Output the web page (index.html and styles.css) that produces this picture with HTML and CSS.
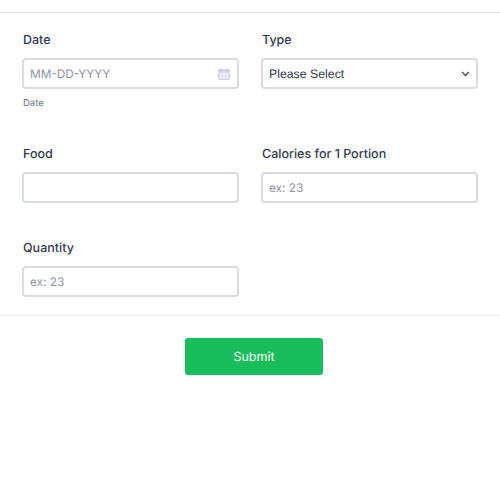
FILE: index.html
```html
<!DOCTYPE html>
<html lang="en">
<head>
<meta charset="utf-8">
<title>Food log</title>
<link rel="stylesheet" href="styles.css">
</head>
<body>
<form class="form">
  <div class="fields">
    <div class="row row-first">
      <div class="field">
        <label class="label">Date</label>
        <div class="control">
          <span class="placeholder">MM-DD-YYYY</span>
          <svg class="cal" width="12" height="12" viewBox="0 0 13 13"><path d="M0 2.5a1 1 0 0 1 1-1h11a1 1 0 0 1 1 1V4H0z" fill="#c5c8d6"/><path d="M0 4.6h13V12a1 1 0 0 1-1 1H1a1 1 0 0 1-1-1z" fill="#d3d5e0"/><rect x="2.5" y="0.3" width="1.4" height="2" fill="#c5c8d6"/><rect x="9.1" y="0.3" width="1.4" height="2" fill="#c5c8d6"/><g fill="#fff"><rect x="1.8" y="6" width="2.4" height="2"/><rect x="5.3" y="6" width="2.4" height="2"/><rect x="8.8" y="6" width="2.4" height="2"/><rect x="1.8" y="9.3" width="2.4" height="2"/><rect x="5.3" y="9.3" width="2.4" height="2"/><rect x="8.8" y="9.3" width="2.4" height="2"/></g></svg>
        </div>
        <div class="helper">Date</div>
      </div>
      <div class="field">
        <label class="label">Type</label>
        <div class="control">
          <span class="value">Please Select</span>
          <svg class="chev" width="9" height="6" viewBox="0 0 10 7"><path d="M1 1.2 5 5.2 9 1.2" fill="none" stroke="#4a5163" stroke-width="1.6"/></svg>
        </div>
      </div>
    </div>
    <div class="row row-second">
      <div class="field">
        <label class="label">Food</label>
        <div class="control"></div>
      </div>
      <div class="field">
        <label class="label">Calories for 1 Portion</label>
        <div class="control"><span class="placeholder">ex: 23</span></div>
      </div>
    </div>
    <div class="row row-third">
      <div class="field">
        <label class="label">Quantity</label>
        <div class="control"><span class="placeholder">ex: 23</span></div>
      </div>
    </div>
  </div>
  <div class="actions">
    <button type="button" class="submit">Submit</button>
  </div>
</form>
</body>
</html>
```

FILE: styles.css
```css
html, body {
  margin: 0;
  padding: 0;
  background: #fff;
}
body {
  font-family: Inter, "Liberation Sans", sans-serif;
  color: #343b4f;
  text-rendering: geometricPrecision;
}
.form {
  margin-top: 12px;
  border-top: 1px solid #e3e5ec;
}
.fields {
  padding: 20px 22px 18px;
  border-bottom: 1px solid #eceef2;
}
.row {
  display: grid;
  grid-template-columns: 217px 217px;
  column-gap: 22px;
}
.row-second {
  margin-top: 37px;
}
.row-third {
  margin-top: 38px;
}
.label {
  display: block;
  height: 16px;
  margin-left: 1px;
  margin-bottom: 9px;
  font-size: 12.5px;
  line-height: 16px;
  font-weight: 450;
}
.control {
  box-sizing: border-box;
  height: 31px;
  display: flex;
  align-items: center;
  justify-content: space-between;
  padding: 0 6px;
  background: #fff;
  border: 2px solid #d9dbe4;
  border-radius: 4px;
  font-size: 11.8px;
}
.placeholder {
  color: #8d91a5;
}
.value {
  color: #343b4f;
  font-family: "Liberation Sans", Arial, sans-serif;
  font-size: 12.3px;
}
.cal {
  margin-right: 1px;
}
.helper {
  margin-top: 9px;
  margin-left: 1px;
  height: 12px;
  font-size: 9.5px;
  line-height: 12px;
  color: #6f7489;
}
.actions {
  display: flex;
  padding: 22px 0 0 185px;
}
.submit {
  width: 138px;
  height: 37px;
  padding: 1px 0 0;
  border: 0;
  border-radius: 3px;
  background: #18bd5b;
  color: #fff;
  font-family: Inter, "Liberation Sans", sans-serif;
  font-size: 12.5px;
  font-weight: 400;
  text-rendering: geometricPrecision;
}
```
